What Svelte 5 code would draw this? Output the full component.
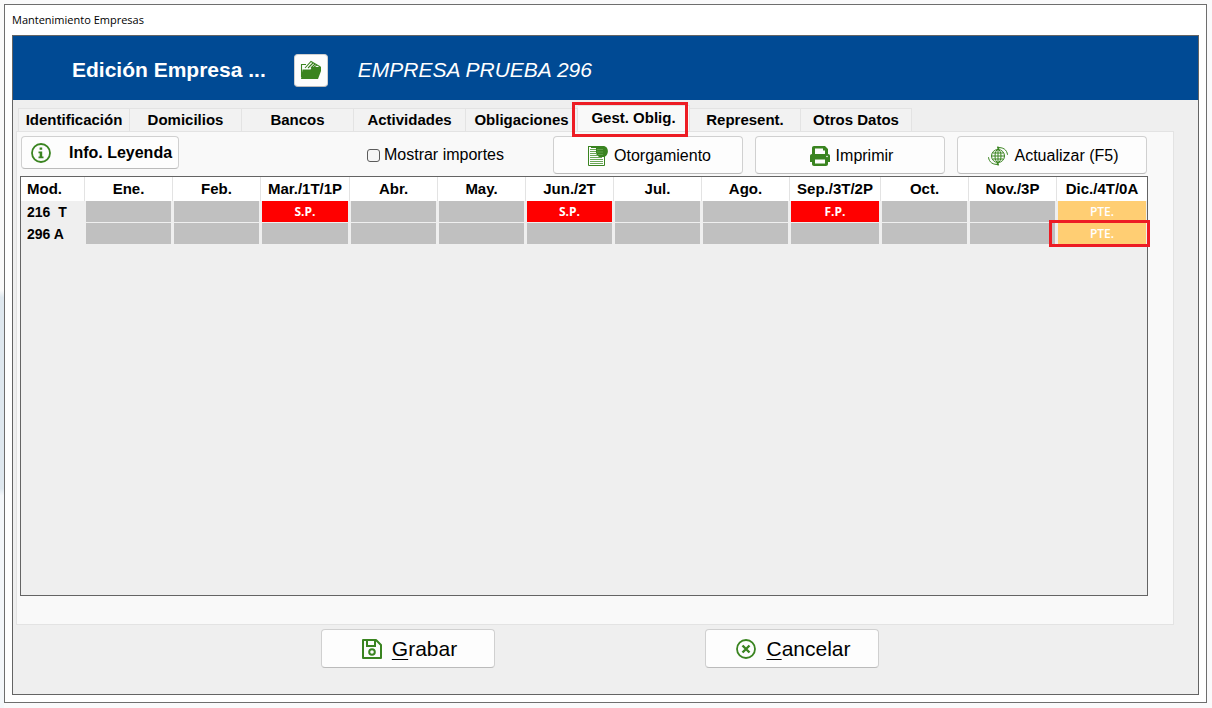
<script lang="ts">
	type Cell = { text: string; kind: string };

	const tabs: string[] = [
		"Identificación",
		"Domicilios",
		"Bancos",
		"Actividades",
		"Obligaciones",
		"Gest. Oblig.",
		"Represent.",
		"Otros Datos",
	];
	const months: { name: string; size?: string }[] = [
		{ name: "Ene." },
		{ name: "Feb." },
		{ name: "Mar./1T/1P", size: "medium" },
		{ name: "Abr." },
		{ name: "May." },
		{ name: "Jun./2T" },
		{ name: "Jul." },
		{ name: "Ago." },
		{ name: "Sep./3T/2P", size: "wide" },
		{ name: "Oct." },
		{ name: "Nov./3P" },
		{ name: "Dic./4T/0A", size: "wide" },
	];

	const empty: Cell = { text: "", kind: "empty" };
	const late = (text: string): Cell => ({ text, kind: "late" });
	const pending: Cell = { text: "PTE.", kind: "pending" };

	const rows: { model: string; cells: Cell[] }[] = [
		{
			model: "216 \u00a0T",
			cells: [empty, empty, late("S.P."), empty, empty, late("S.P."), empty, empty, late("F.P."), empty, empty, pending],
		},
		{
			model: "296 A",
			cells: [...Array(11).fill(empty), { ...pending, kind: "pending marked" }],
		},
	];

	let activeTab = $state(5);
	let showAmounts = $state(false);
</script>

<div class="desktop">
	<div class="window">
		<div class="titlebar">Mantenimiento Empresas</div>
		<main>
			<header>
				<h1>Edición Empresa ...</h1>
				<button class="folder" aria-label="Abrir empresa">
					<svg width="22" height="20" viewBox="0 0 22 20">
						<path d="M1.500 17V4.500h4.500M5 8l6-6.500 9.500 5.500M8 8l5-5M11 8l4-4M14 7l3-2" fill="none" stroke="#3a8420" stroke-width="1.1" />
						<path d="M1 19 2.500 9.500h8L12 7h9v4l-3 8z" fill="#3a8420" />
					</svg>
				</button>
				<em>EMPRESA PRUEBA 296</em>
			</header>

			<div class="tabs" role="tablist">
				{#each tabs as tab, i}
					<button role="tab" class:active={i === activeTab} aria-selected={i === activeTab} onclick={() => (activeTab = i)}>
						{tab}
					</button>
				{/each}
			</div>

			<section>
				<div class="toolbar">
					<button class="info">
						<svg width="20" height="20" viewBox="0 0 20 20">
							<circle cx="10" cy="10" r="9" fill="none" stroke="#3a8420" stroke-width="1.8" />
							<path d="M8.600 4.500h2.600v2.300H8.600zM7.500 8.500h3.700v5h1.300v1.700h-5v-1.700h1.200v-3.300H7.500z" fill="#3a8420" />
						</svg>
						Info. Leyenda
					</button>
					<label>
						<input type="checkbox" bind:checked={showAmounts} />
						Mostrar importes
					</label>
					<div class="actions">
						<button>
							<svg width="20" height="20" viewBox="0 0 20 20">
								<path d="M3 0h12c7 0 6 11 0 11h-4L8 8V2H3z" fill="#3a8420" />
								<path d="M.5.5v19h16V10M0 .5h8" fill="none" stroke="#3a8420" />
								<path d="M2 3.500h6M2 5.500h6M2 7.500h7M2 9.500h8M2 11.500h12M2 13.500h13M2 15.500h13M2 17.500h13" stroke="#6ba657" />
								<path d="M9 3.500h6M9 6h6M10 8.500h5" stroke="#70aa5d" stroke-width=".7" />
							</svg>
							Otorgamiento
						</button>
						<button>
							<svg width="20" height="20" viewBox="0 0 20 20">
								<path d="M4 0h11l3 3v5c1.300 0 2 .8 2 2v6h-2v2c0 1.200-.8 2-2 2H4c-1.200 0-2-.8-2-2v-2H0v-6c0-1.200.8-2 2-2V2c0-1.200.8-2 2-2z" fill="#3a8420" />
								<path d="M5 2.500h8v2h2V8H5zM5 13.500h10v4H5z" fill="#fdfdfd" />
								<circle cx="17" cy="10.500" r=".8" fill="#fdfdfd" />
							</svg>
							Imprimir
						</button>
						<button>
							<svg width="20" height="20" viewBox="0 0 20 20" fill="none" stroke="#3a8420">
								<circle cx="10" cy="10" r="6.500" />
								<ellipse cx="10" cy="10" rx="3" ry="6.500" />
								<path d="M10 3.500v13M3.500 10h13M4.500 7h11M4.500 13h11M9 1.800c6-1 10 2 10.500 7M11 18.200c-6 1-10-2-10.500-7" />
								<path d="m9.500 0 2.500 1.800L9.500 4zM10.500 16 8 18.200l2.500 1.800z" fill="#3a8420" stroke="none" />
							</svg>
							Actualizar (F5)
						</button>
					</div>
				</div>

				<div class="grid">
					<table>
						<colgroup>
							<col class="model-col" />
							{#each months as month}
								<col class={month.size} />
							{/each}
						</colgroup>
						<thead>
							<tr>
								<th>Mod.</th>
								{#each months as month}
									<th>{month.name}</th>
								{/each}
							</tr>
						</thead>
						<tbody>
							{#each rows as row}
								<tr>
									<th>{row.model}</th>
									{#each row.cells as cell}
										<td class={cell.kind}>{cell.text}</td>
									{/each}
								</tr>
							{/each}
						</tbody>
					</table>
				</div>
			</section>

			<footer>
				<button>
					<svg width="20" height="20" viewBox="0 0 20 20" fill="none" stroke="#3a8420" stroke-width="2">
						<path d="M1 1h13l5 5v13H1z" stroke-linejoin="round" />
						<path d="M5 1v6h8V1" />
						<circle cx="10" cy="13" r="2.800" />
					</svg>
					<span><u>G</u>rabar</span>
				</button>
				<button>
					<svg width="20" height="20" viewBox="0 0 20 20" fill="none" stroke="#3a8420">
						<circle cx="10" cy="10" r="9" stroke-width="1.800" />
						<path d="m6.500 6.500 7 7m0-7-7 7" stroke-width="2.400" />
					</svg>
					<span><u>C</u>ancelar</span>
				</button>
			</footer>
		</main>
	</div>
</div>

<style>
	:global(body) {
		margin: 0;
	}

	* {
		box-sizing: border-box;
	}

	.desktop {
		display: flex;
		min-height: 100vh;
		padding: 4px 5px 5px 4px;
		background: linear-gradient(#fafafa 41%, #dfe8ef 42%, #dfe8ef 69%, #f4f7fa 70%) left / 4px 100% no-repeat #fafafb;
		color: #000;
		font-family: "Liberation Sans", Arial, sans-serif;
		font-size: 16px;
	}

	.window {
		flex: 1;
		display: flex;
		flex-direction: column;
		padding: 0 7px 7px;
		border: 1px solid #6e6e6e;
		background: #fff;
	}

	.titlebar {
		height: 30px;
		font-family: "Open Sans", "Noto Sans", sans-serif;
		font-size: 11px;
		line-height: 30px;
	}

	main {
		flex: 1;
		display: flex;
		flex-direction: column;
		border: 1px solid #646464;
		background: #efefef;
	}

	header {
		display: flex;
		align-items: center;
		height: 64px;
		padding: 4px 0 0 59px;
		background: #004a94;
		color: #fff;
		font-size: 21px;
	}

	h1 {
		margin: 0;
		font-size: 21px;
	}

	button {
		display: flex;
		align-items: center;
		justify-content: center;
		padding: 0;
		border: 1px solid #d0d0d0;
		border-bottom-color: #bbb;
		border-radius: 4px;
		background: #fdfdfd;
		color: #000;
		font-family: inherit;
		font-size: 16px;
		white-space: nowrap;
	}

	.folder {
		width: 34px;
		height: 33px;
		margin: 0 30px 0 28px;
	}

	.tabs {
		display: flex;
		align-items: flex-end;
		height: 31px;
		padding-left: 5px;
	}

	.tabs button {
		width: 112px;
		height: 23px;
		padding-bottom: 2px;
		border: 1px solid #e3e3e3;
		border-width: 1px 1px 0 0;
		border-radius: 0;
		background: #f2f2f2;
		font-size: 15px;
		font-weight: bold;
	}

	.tabs button:first-child {
		border-left-width: 1px;
	}

	.tabs .active {
		position: relative;
		height: 26px;
		background: #f9f9f9;
	}

	.tabs .active ~ button {
		width: 111px;
	}

	.tabs .active::after {
		content: "";
		position: absolute;
		inset: -4px 1px -6px -6px;
		border: 3px solid #ed1c24;
	}

	section {
		flex: 1;
		display: flex;
		flex-direction: column;
		margin: 0 24px 0 3px;
		padding: 4px 25px 28px 3px;
		border: 1px solid #e3e3e3;
		background: #f9f9f9;
	}

	.toolbar {
		display: flex;
		align-items: flex-start;
		height: 40px;
		padding: 0 1px;
	}

	.info {
		gap: 18px;
		width: 158px;
		height: 33px;
		padding-left: 3px;
		font-weight: bold;
	}

	label {
		display: flex;
		align-items: center;
		gap: 4px;
		height: 38px;
		margin: 0 49px 0 auto;
	}

	input {
		appearance: none;
		width: 13px;
		height: 13px;
		margin: 0;
		border: 1px solid #5c5c5c;
		border-radius: 3px;
		background: #f5f5f5;
	}

	input:checked {
		background: #3a8420;
	}

	.actions {
		display: flex;
		gap: 12px;
	}

	.actions button {
		gap: 6px;
		width: 190px;
		height: 38px;
		padding: 1px 0 0 3px;
	}

	.grid {
		flex: 1;
		border: 1px solid #646464;
		background: #efefef;
	}

	table {
		width: 100%;
		table-layout: fixed;
		border-collapse: separate;
		border-spacing: 0;
	}

	col {
		width: 88px;
	}

	.model-col {
		width: 63px;
	}

	.medium {
		width: 89px;
	}

	.wide {
		width: 91px;
	}

	th {
		padding: 0;
		font-size: 15px;
	}

	thead th {
		height: 24px;
		padding-bottom: 2px;
		border-left: 1px solid #e3e3e3;
		background: #fff;
	}

	tr th:first-child {
		padding-left: 6px;
		border-left: 0;
		text-align: left;
	}

	tbody th {
		font-size: 14px;
	}

	td {
		height: 22px;
		padding: 0;
		border: solid #efefef;
		border-width: 0 1px 1px 2px;
		color: #fff;
		font-family: "Open Sans", "Noto Sans", sans-serif;
		font-size: 12px;
		font-weight: 600;
		line-height: 21px;
		text-align: center;
	}

	.empty {
		background: #c0c0c0;
	}

	.late {
		background: #f00;
		font-weight: 700;
	}

	.pending {
		background: #ffce73;
	}

	.marked {
		position: relative;
	}

	.marked::after {
		content: "";
		position: absolute;
		inset: -3px -4px -3px -9px;
		border: 3px solid #ed1c24;
	}

	footer {
		display: flex;
		justify-content: center;
		gap: 210px;
		padding: 4px 11px 26px 0;
	}

	footer button {
		gap: 10px;
		width: 174px;
		height: 39px;
		padding-left: 3px;
		font-size: 21px;
	}

	u {
		text-decoration-thickness: 1px;
		text-underline-offset: 3px;
	}
</style>
